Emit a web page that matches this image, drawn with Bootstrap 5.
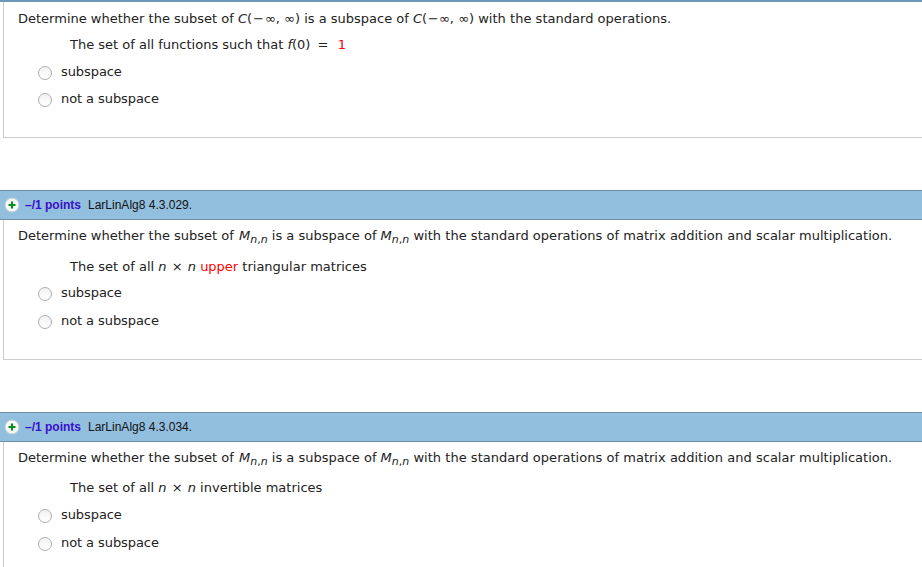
<!DOCTYPE html>
<html lang="en">
<head>
<meta charset="utf-8">
<title>Questions</title>
<link rel="stylesheet" href="https://cdn.jsdelivr.net/npm/bootstrap@5.3.0/dist/css/bootstrap.min.css">
<style>
html,body{height:567px;overflow:hidden;background:#fff}
body{font-family:"DejaVu Sans","Liberation Sans",sans-serif;font-size:13px;line-height:16px;color:#222}
.topline{height:2px;background:#6d96bb}
.qbox{margin-left:3px;border-left:1px solid #ccc;border-bottom:1px solid #ccc;padding-left:14px}
.q-first{height:136px;padding-top:9px}
.q-next{height:140px;padding-top:8px}
.q-gap{height:52px}
.q-head{height:30px;background:#93bfdf;border-top:1px solid #6f8ea8;border-bottom:1px solid #6f8ea8;padding-left:4px;font-family:"Liberation Sans",Arial,sans-serif;font-size:12px;gap:5px}
.q-pts{color:#3a10c8;font-weight:700}
.q-code{color:#111;margin-left:2px}
.q-plus{width:16px;height:16px;display:block}
.q-stem{height:16px}
.q-sub{margin-top:10px;padding-left:52px;height:16px}
.q-next .q-sub{margin-top:15px}
.q-next.q-last .q-sub{margin-top:14px}
.q-opt{padding-left:20px;gap:9px;height:16px;margin-top:11px}
.q-next .q-sub + .q-opt{margin-top:10px}
.q-next.q-last .q-sub + .q-opt{margin-top:11px}
.q-next .q-opt + .q-opt{margin-top:12px}
.q-radio{width:14px;height:14px;border:1.5px solid #adadad;border-radius:50%;background:linear-gradient(#f2f2f2,#fff);flex:none;margin-top:2px}
.q-label{letter-spacing:-.08px}
.q-ans{color:#f00}
.q-tail{letter-spacing:.025px}
.q-sym{margin:0 1px}
.q-sym2{margin:0 .5px}
.q-eq{margin:0 1px 0 3px}
.q-m{margin-left:1px}
sub{font-size:11px;bottom:-.3em}
</style>
</head>
<body>
<div class="topline"></div>
<section class="qbox q-first">
  <div class="q-stem">Determine whether the subset of <i>C</i>(<span class="q-sym">−</span>∞, ∞) is a subspace of <i>C</i>(<span class="q-sym2">−</span>∞, ∞)<span class="q-tail"> with the standard operations.</span></div>
  <div class="q-sub">The set of all functions such that <i>f</i>(0)<span class="q-eq"> =</span> &nbsp;<span class="q-ans">1</span></div>
  <div class="q-opt d-flex"><span class="q-radio"></span><span class="q-label">subspace</span></div>
  <div class="q-opt d-flex"><span class="q-radio"></span><span class="q-label">not a subspace</span></div>
</section>
<div class="q-gap"></div>
<header class="q-head d-flex align-items-center">
  <svg class="q-plus" viewBox="0 0 16 16"><circle cx="8" cy="8" r="7" fill="#f6f8f9" stroke="#c2ccd3"/><path d="M8 4.5v7M4.5 8h7" stroke="#0a8a1e" stroke-width="2.2"/></svg>
  <span class="q-pts">–/1 points</span><span class="q-code">LarLinAlg8 4.3.029.</span>
</header>
<section class="qbox q-next">
  <div class="q-stem">Determine whether the subset of <i class="q-m">M</i><sub><i>n</i>,<i>n</i></sub> is a subspace of <i>M</i><sub><i>n</i>,<i>n</i></sub><span class="q-tail"> with the standard operations of matrix addition and scalar multiplication.</span></div>
  <div class="q-sub">The set of all <i>n</i> <span class="q-sym">×</span> <i>n</i> <span class="q-ans">upper</span> triangular matrices</div>
  <div class="q-opt d-flex"><span class="q-radio"></span><span class="q-label">subspace</span></div>
  <div class="q-opt d-flex"><span class="q-radio"></span><span class="q-label">not a subspace</span></div>
</section>
<div class="q-gap"></div>
<header class="q-head d-flex align-items-center">
  <svg class="q-plus" viewBox="0 0 16 16"><circle cx="8" cy="8" r="7" fill="#f6f8f9" stroke="#c2ccd3"/><path d="M8 4.5v7M4.5 8h7" stroke="#0a8a1e" stroke-width="2.2"/></svg>
  <span class="q-pts">–/1 points</span><span class="q-code">LarLinAlg8 4.3.034.</span>
</header>
<section class="qbox q-next q-last">
  <div class="q-stem">Determine whether the subset of <i class="q-m">M</i><sub><i>n</i>,<i>n</i></sub> is a subspace of <i>M</i><sub><i>n</i>,<i>n</i></sub><span class="q-tail"> with the standard operations of matrix addition and scalar multiplication.</span></div>
  <div class="q-sub">The set of all <i>n</i> <span class="q-sym">×</span> <i>n</i> invertible matrices</div>
  <div class="q-opt d-flex"><span class="q-radio"></span><span class="q-label">subspace</span></div>
  <div class="q-opt d-flex"><span class="q-radio"></span><span class="q-label">not a subspace</span></div>
</section>
<script src="https://cdn.jsdelivr.net/npm/bootstrap@5.3.0/dist/js/bootstrap.bundle.min.js"></script>
</body>
</html>
